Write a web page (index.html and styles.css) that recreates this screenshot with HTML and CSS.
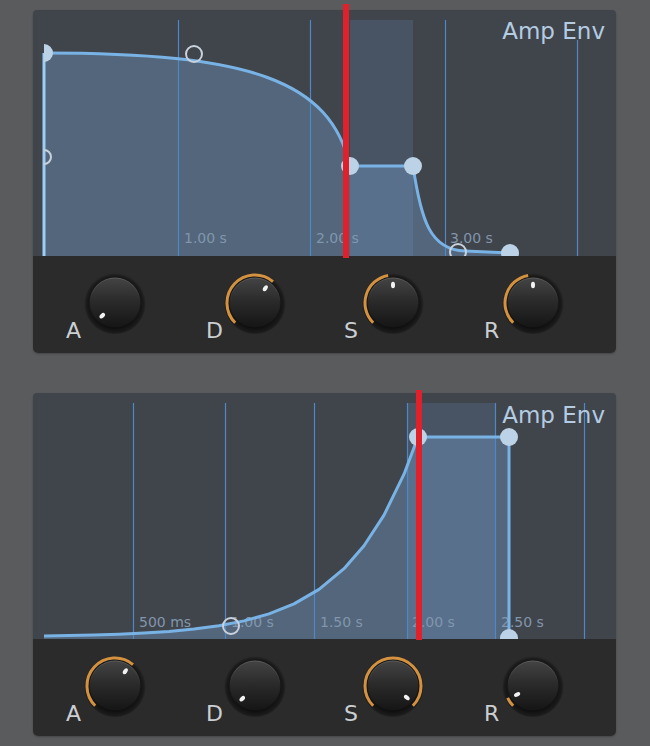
FILE: index.html
```html
<!DOCTYPE html>
<html lang="en">
<head>
<meta charset="utf-8">
<title>Amp Env</title>
<link rel="stylesheet" href="styles.css">
</head>
<body>
<svg class="defs" width="0" height="0" aria-hidden="true">
  <defs>
    <radialGradient id="well" cx="50%" cy="52%" r="50%">
      <stop offset="0.8" stop-color="#121212"/>
      <stop offset="0.92" stop-color="#1b1b1b"/>
      <stop offset="1" stop-color="#2a2a2a"/>
    </radialGradient>
    <linearGradient id="cap" x1="0" y1="0" x2="0" y2="1">
      <stop offset="0" stop-color="#434343"/>
      <stop offset="0.45" stop-color="#2b2b2b"/>
      <stop offset="1" stop-color="#151515"/>
    </linearGradient>
    <linearGradient id="rim" x1="0" y1="0" x2="0" y2="1">
      <stop offset="0" stop-color="#5c5c5c"/>
      <stop offset="0.5" stop-color="#262626"/>
      <stop offset="1" stop-color="#0c0c0c"/>
    </linearGradient>
  </defs>
</svg>

<main class="page">

  <!-- Envelope 1: instant attack, long decay -->
  <section class="env">
    <div class="graph">
      <svg class="plot" width="583" height="246" viewBox="0 0 583 246">
        <rect class="plot-bg" width="583" height="246"/>
        <rect class="hold" x="317" y="10" width="63" height="236"/>
        <path class="area" d="M11,43 C217,43 297,70 317,156 L380,156 C388,210 397,240 432,241 L477,243 L477,246 L11,246 Z"/>
        <g class="grid">
          <line x1="145.5" y1="10" x2="145.5" y2="246"/>
          <line x1="277.5" y1="10" x2="277.5" y2="246"/>
          <line x1="412.5" y1="10" x2="412.5" y2="246"/>
          <line x1="544.5" y1="30" x2="544.5" y2="246"/>
        </g>
        <g class="ticks">
          <text x="151" y="233">1.00 s</text>
          <text x="283" y="233">2.00 s</text>
          <text x="417" y="233">3.00 s</text>
        </g>
        <line class="attack" x1="11" y1="246" x2="11" y2="43"/>
        <path class="curve" d="M11,43 C217,43 297,70 317,156 L380,156 C388,210 397,240 432,241 L477,243"/>
        <path class="node" d="M11,34 A9,9 0 0 1 11,52 Z"/>
        <path class="handle" d="M11,140 A7,7 0 0 1 11,154"/>
        <circle class="handle" cx="161" cy="44" r="8"/>
        <circle class="handle" cx="425" cy="242" r="8"/>
        <circle class="node" cx="317" cy="156" r="9"/>
        <circle class="node" cx="380" cy="156" r="9"/>
        <circle class="node" cx="477" cy="243" r="9"/>
        <text class="title" x="572" y="29">Amp Env</text>
      </svg>
      <div class="playhead" style="left:310px; top:-6px; height:254px"></div>
    </div>
    <div class="knobs">
      <div class="knob-cell">
        <span class="knob-label">A</span>
        <svg class="knob" viewBox="0 0 62 62">
          <circle cx="31" cy="31" r="31" fill="url(#well)"/>
          <circle cx="31" cy="31" r="25.5" fill="url(#rim)"/>
          <circle cx="31" cy="31" r="24.5" fill="url(#cap)"/>
          <g transform="rotate(-135 31 31)"><ellipse class="pointer" cx="31" cy="13" rx="2" ry="3.3"/></g>
        </svg>
      </div>
      <div class="knob-cell">
        <span class="knob-label">D</span>
        <svg class="knob" viewBox="0 0 62 62">
          <circle cx="31" cy="31" r="31" fill="url(#well)"/>
          <circle cx="31" cy="31" r="25.5" fill="url(#rim)"/>
          <circle cx="31" cy="31" r="24.5" fill="url(#cap)"/>
          <path class="arc" d="M11.2,50.8 A28,28 0 0 1 49,9.55"/>
          <g transform="rotate(35 31 31)"><ellipse class="pointer" cx="31" cy="13" rx="2" ry="3.3"/></g>
        </svg>
      </div>
      <div class="knob-cell">
        <span class="knob-label">S</span>
        <svg class="knob" viewBox="0 0 62 62">
          <circle cx="31" cy="31" r="31" fill="url(#well)"/>
          <circle cx="31" cy="31" r="25.5" fill="url(#rim)"/>
          <circle cx="31" cy="31" r="24.5" fill="url(#cap)"/>
          <path class="arc" d="M11.2,50.8 A28,28 0 0 1 26.14,3.43"/>
          <g transform="rotate(0 31 31)"><ellipse class="pointer" cx="31" cy="13" rx="2" ry="3.3"/></g>
        </svg>
      </div>
      <div class="knob-cell">
        <span class="knob-label">R</span>
        <svg class="knob" viewBox="0 0 62 62">
          <circle cx="31" cy="31" r="31" fill="url(#well)"/>
          <circle cx="31" cy="31" r="25.5" fill="url(#rim)"/>
          <circle cx="31" cy="31" r="24.5" fill="url(#cap)"/>
          <path class="arc" d="M11.2,50.8 A28,28 0 0 1 26.14,3.43"/>
          <g transform="rotate(0 31 31)"><ellipse class="pointer" cx="31" cy="13" rx="2" ry="3.3"/></g>
        </svg>
      </div>
    </div>
  </section>

  <!-- Envelope 2: exponential attack, full sustain, instant release -->
  <section class="env">
    <div class="graph">
      <svg class="plot" width="583" height="246" viewBox="0 0 583 246">
        <rect class="plot-bg" width="583" height="246"/>
        <rect class="hold" x="374" y="10" width="88" height="236"/>
        <path class="area" d="M11,243 L36,242.6 L61,242.1 L86,241.3 L111,240.1 L136,238.5 L161,236.1 L186,232.8 L211,227.9 L236,220.9 L261,210.9 L286,196.4 L311,175.7 L331,152.8 L351,122.1 L371,81.2 L385,44 L476,44 L476,246 L11,246 Z"/>
        <g class="grid">
          <line x1="100.5" y1="10" x2="100.5" y2="246"/>
          <line x1="192.5" y1="10" x2="192.5" y2="246"/>
          <line x1="281.5" y1="10" x2="281.5" y2="246"/>
          <line x1="374.5" y1="10" x2="374.5" y2="246"/>
          <line x1="462.5" y1="10" x2="462.5" y2="246"/>
          <line x1="551.5" y1="10" x2="551.5" y2="246"/>
        </g>
        <g class="ticks">
          <text x="106" y="234">500 ms</text>
          <text x="198" y="234">1.00 s</text>
          <text x="287" y="234">1.50 s</text>
          <text x="379" y="234">2.00 s</text>
          <text x="468" y="234">2.50 s</text>
        </g>
        <path class="curve" d="M11,243 L36,242.6 L61,242.1 L86,241.3 L111,240.1 L136,238.5 L161,236.1 L186,232.8 L211,227.9 L236,220.9 L261,210.9 L286,196.4 L311,175.7 L331,152.8 L351,122.1 L371,81.2 L385,44 L476,44 L476,244"/>
        <circle class="handle" cx="198" cy="233" r="8"/>
        <circle class="node" cx="385" cy="44" r="9"/>
        <circle class="node" cx="476" cy="44" r="9"/>
        <circle class="node" cx="476" cy="245" r="9"/>
        <text class="title" x="572" y="30">Amp Env</text>
      </svg>
      <div class="playhead" style="left:383px; top:-3px; height:250px"></div>
    </div>
    <div class="knobs">
      <div class="knob-cell">
        <span class="knob-label">A</span>
        <svg class="knob" viewBox="0 0 62 62">
          <circle cx="31" cy="31" r="31" fill="url(#well)"/>
          <circle cx="31" cy="31" r="25.5" fill="url(#rim)"/>
          <circle cx="31" cy="31" r="24.5" fill="url(#cap)"/>
          <path class="arc" d="M11.2,50.8 A28,28 0 0 1 49,9.55"/>
          <g transform="rotate(35 31 31)"><ellipse class="pointer" cx="31" cy="13" rx="2" ry="3.3"/></g>
        </svg>
      </div>
      <div class="knob-cell">
        <span class="knob-label">D</span>
        <svg class="knob" viewBox="0 0 62 62">
          <circle cx="31" cy="31" r="31" fill="url(#well)"/>
          <circle cx="31" cy="31" r="25.5" fill="url(#rim)"/>
          <circle cx="31" cy="31" r="24.5" fill="url(#cap)"/>
          <g transform="rotate(-135 31 31)"><ellipse class="pointer" cx="31" cy="13" rx="2" ry="3.3"/></g>
        </svg>
      </div>
      <div class="knob-cell">
        <span class="knob-label">S</span>
        <svg class="knob" viewBox="0 0 62 62">
          <circle cx="31" cy="31" r="31" fill="url(#well)"/>
          <circle cx="31" cy="31" r="25.5" fill="url(#rim)"/>
          <circle cx="31" cy="31" r="24.5" fill="url(#cap)"/>
          <path class="arc" d="M11.2,50.8 A28,28 0 1 1 50.8,50.8"/>
          <g transform="rotate(130 31 31)"><ellipse class="pointer" cx="31" cy="13" rx="2" ry="3.3"/></g>
        </svg>
      </div>
      <div class="knob-cell">
        <span class="knob-label">R</span>
        <svg class="knob" viewBox="0 0 62 62">
          <circle cx="31" cy="31" r="31" fill="url(#well)"/>
          <circle cx="31" cy="31" r="25.5" fill="url(#rim)"/>
          <circle cx="31" cy="31" r="24.5" fill="url(#cap)"/>
          <path class="arc" d="M11.2,50.8 A28,28 0 0 1 5.62,42.83"/>
          <g transform="rotate(-118 31 31)"><ellipse class="pointer" cx="31" cy="13" rx="2" ry="3.3"/></g>
        </svg>
      </div>
    </div>
  </section>

</main>
</body>
</html>
```

FILE: styles.css
```css
html, body {
  margin: 0;
  padding: 0;
  background: #5a5b5d;
}

body {
  width: 650px;
  height: 746px;
  overflow: hidden;
  font-family: "DejaVu Sans", "Liberation Sans", sans-serif;
}

.defs {
  position: absolute;
  width: 0;
  height: 0;
  overflow: hidden;
}

.page {
  display: flex;
  flex-direction: column;
  gap: 40px;
  padding: 10px 0 0 33px;
}

.env {
  width: 583px;
  display: flex;
  flex-direction: column;
  border-radius: 5px;
  box-shadow: 0 1px 2px rgba(0, 0, 0, 0.25);
}

/* ---------- envelope graph ---------- */

.graph {
  position: relative;
  height: 246px;
}

.plot {
  display: block;
  border-radius: 4px 4px 0 0;
}

.plot-bg {
  fill: #40444b;
}

.hold {
  fill: #485464;
}

.area {
  fill: rgba(120, 165, 215, 0.35);
}

.grid line {
  stroke: #4f88c8;
  stroke-width: 1.2;
}

.ticks text {
  font-family: "DejaVu Sans", sans-serif;
  font-size: 14px;
  fill: #8196ad;
}

.attack {
  stroke: #9ccdf4;
  stroke-width: 3;
}

.curve {
  fill: none;
  stroke: #79b3e6;
  stroke-width: 3;
  stroke-linejoin: round;
}

.node {
  fill: #bcd2e6;
}

.handle {
  fill: none;
  stroke: #c9d2dc;
  stroke-width: 2;
}

.title {
  font-family: "DejaVu Sans", sans-serif;
  font-size: 23px;
  fill: #b4cce2;
  text-anchor: end;
}

.playhead {
  position: absolute;
  width: 6px;
  background: #e0202a;
}

/* ---------- knob strip ---------- */

.knobs {
  height: 97px;
  box-sizing: border-box;
  padding: 16px 0 0 33px;
  background: #2b2b2b;
  border-radius: 0 0 5px 5px;
  display: grid;
  grid-template-columns: 140px 138px 140px auto;
}

.knob-cell {
  display: flex;
  align-items: flex-start;
}

.knob-label {
  width: 16px;
  margin-top: 48px;
  font-size: 22px;
  line-height: 22px;
  color: #cbcfd3;
}

.knob {
  display: block;
  width: 62px;
  height: 62px;
  margin-left: 2px;
}

.arc {
  fill: none;
  stroke: #d4913f;
  stroke-width: 3;
}

.pointer {
  fill: #f2f2f2;
}
```
